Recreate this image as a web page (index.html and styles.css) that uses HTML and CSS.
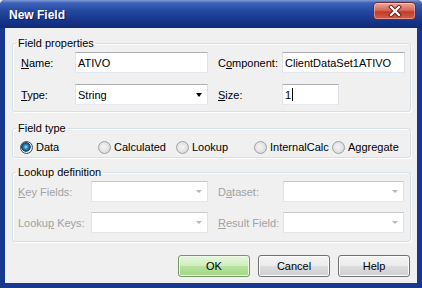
FILE: index.html
```html
<!doctype html>
<html lang="en">
<head>
  <meta charset="UTF-8">
  <title>New Field</title>
  <link rel="stylesheet" href="styles.css">
</head>
<body>
<div class="window">
  <div class="titlebar">
    <span class="title">New Field</span>
    <span class="close">
      <svg width="14" height="12" viewBox="0 0 14 12">
        <path d="M3 2 L11 10 M11 2 L3 10" stroke="#6a1a12" stroke-width="4" stroke-linecap="square"/>
        <path d="M3 2 L11 10 M11 2 L3 10" stroke="#ffffff" stroke-width="2.2" stroke-linecap="square"/>
      </svg>
    </span>
  </div>

  <div class="client">
    <!-- field properties -->
    <fieldset class="group props">
      <legend>Field properties</legend>
      <div class="props-grid">
        <label class="lbl"><u>N</u>ame:</label>
        <div class="edit">ATIVO</div>
        <label class="lbl right">C<u>o</u>mponent:</label>
        <div class="edit">ClientDataSet1ATIVO</div>
        <label class="lbl"><u>T</u>ype:</label>
        <div class="combo">String<i class="arrow"></i></div>
        <label class="lbl right"><u>S</u>ize:</label>
        <div class="edit size">1<span class="caret"></span></div>
      </div>
    </fieldset>

    <!-- field type -->
    <fieldset class="group types">
      <legend>Field type</legend>
      <div class="radio-row">
        <span class="opt"><i class="radio on"></i>Data</span>
        <span class="opt"><i class="radio"></i>Calculated</span>
        <span class="opt"><i class="radio"></i>Lookup</span>
        <span class="opt"><i class="radio"></i>InternalCalc</span>
        <span class="opt"><i class="radio"></i>Aggregate</span>
      </div>
    </fieldset>

    <!-- lookup definition -->
    <fieldset class="group lookup">
      <legend>Lookup definition</legend>
      <div class="lookup-grid">
        <label class="lbl off"><u>K</u>ey Fields:</label>
        <div class="combo off"><i class="arrow"></i></div>
        <label class="lbl off right">D<u>a</u>taset:</label>
        <div class="combo off"><i class="arrow"></i></div>
        <label class="lbl off">Looku<u>p</u> Keys:</label>
        <div class="combo off"><i class="arrow"></i></div>
        <label class="lbl off right"><u>R</u>esult Field:</label>
        <div class="combo off"><i class="arrow"></i></div>
      </div>
    </fieldset>

    <div class="buttons">
      <a href="#" class="btn ok">OK</a>
      <a href="#" class="btn">Cancel</a>
      <a href="#" class="btn">Help</a>
    </div>
  </div>
</div>
</body>
</html>
```

FILE: styles.css
```css
body {
  margin: 0;
  background: #dfe5ee;
  font-family: "Liberation Sans", Arial, sans-serif;
  font-size: 11px;
  color: #000;
}
.window {
  width: 422px;
  height: 288px;
  display: flex;
  flex-direction: column;
  background: #17388c;
  border-radius: 5px 5px 0 0;
  overflow: hidden;
}
.titlebar {
  height: 28px;
  flex: none;
  display: flex;
  align-items: center;
  justify-content: space-between;
  padding: 0 6px 0 9px;
  background: linear-gradient(to bottom, #7e9bd6 0, #3d62b8 3px, #24489f 40%, #16348a 75%, #102a76 100%);
}
.title {
  color: #fff;
  font-weight: bold;
  font-size: 12px;
  text-shadow: 1px 1px 0 #0b2060;
  margin-top: 2px;
}
.close {
  width: 41px;
  height: 16px;
  margin-bottom: 7px;
  border: 1px solid #6e2a2a;
  border-radius: 4px;
  background: linear-gradient(to bottom, #e8a89c 0, #d66a58 45%, #c23b28 55%, #d4604a 100%);
  display: flex;
  align-items: center;
  justify-content: center;
  box-shadow: inset 0 0 0 1px rgba(255,255,255,0.35);
}
.close svg {
  display: block;
}

.client {
  flex: 1;
  margin: 0 5px 5px 5px;
  background: #f0f0f0;
  padding: 8px 6px 0 7px;
  display: flex;
  flex-direction: column;
}

.group {
  margin: 0;
  min-width: 0;
  border: 1px solid #d5dfe5;
  border-radius: 3px;
  box-shadow: inset 1px 1px 0 #fff, 1px 1px 0 #fff;
}
.group legend {
  line-height: 14px;
  padding: 0 2px;
}

.props {
  padding: 2px 5px 6px 8px;
}
.props legend {
  margin-left: -5px;
}
.props-grid {
  display: grid;
  grid-template-columns: 54px 133px 74px 123px;
  grid-auto-rows: 21px;
  row-gap: 11px;
  align-items: center;
}

.lbl {
  white-space: nowrap;
}
.lbl.right {
  padding-left: 10px;
}
.lbl.off {
  color: #a2a2a2;
}

.edit,
.combo {
  height: 21px;
  box-sizing: border-box;
  border: 1px solid;
  border-color: #abadb3 #dbdfe6 #e3e9ef #e2e3ea;
  background: #fff;
  padding: 0 2px;
  display: flex;
  align-items: center;
  white-space: nowrap;
}
.edit.size {
  width: 57px;
}
.caret {
  width: 1px;
  height: 13px;
  background: #000;
  margin-left: 1px;
}
.combo {
  justify-content: space-between;
  padding-right: 5px;
}
.arrow {
  width: 0;
  height: 0;
  margin-left: auto;
  border-left: 3px solid transparent;
  border-right: 3px solid transparent;
  border-top: 4px solid #000;
}
.combo.off {
  border-color: #c6c8cc #e0e2e6 #e4e6ea #e0e2e6;
}
.combo.off .arrow {
  border-top-color: #b8b8b8;
  border-left-width: 3px;
  border-right-width: 3px;
  border-top-width: 3px;
}

.types {
  margin-top: 9px;
  padding: 5px 5px 3px 7px;
}
.types legend {
  margin-left: -4px;
}
.radio-row {
  display: grid;
  grid-template-columns: repeat(5, 78px);
  line-height: 14px;
}
.opt {
  display: flex;
  align-items: center;
  white-space: nowrap;
}
.radio {
  width: 11px;
  height: 11px;
  border-radius: 50%;
  border: 1px solid #9ea0a2;
  margin-right: 3px;
  background: radial-gradient(circle at 45% 45%, #f6f6f6 0, #e0e0e0 60%, #cfcfcf 100%);
  flex: none;
}
.radio.on {
  border-color: #3b4f5f;
  background: radial-gradient(circle at 45% 45%, #9fe0ff 0, #2c8fcf 2px, #1d5a86 3.5px, #2a4656 4.5px, #e8e8e8 5px, #cfcfcf 100%);
}

.lookup {
  margin-top: 7px;
  padding: 2px 5px 8px 5px;
}
.lookup legend {
  margin-left: -2px;
}
.lookup-grid {
  display: grid;
  grid-template-columns: 73px 117px 75px 121px;
  grid-auto-rows: 21px;
  row-gap: 10px;
  align-items: center;
}

.buttons {
  display: flex;
  justify-content: flex-end;
  gap: 8px;
  margin-top: 13px;
  margin-right: 1px;
}
.btn {
  width: 72px;
  height: 22px;
  box-sizing: border-box;
  border: 1px solid #707070;
  border-radius: 3px;
  display: flex;
  align-items: center;
  justify-content: center;
  color: #000;
  text-decoration: none;
  background: linear-gradient(to bottom, #f4f4f4 0, #ebebeb 48%, #dddddd 52%, #cfcfcf 100%);
  box-shadow: inset 0 0 0 1px #fcfcfc;
}
.btn.ok {
  border-color: #6f9a62;
  background: linear-gradient(to bottom, #e6f6dc 0, #cfeec0 48%, #b5e29c 52%, #a2d886 100%);
  box-shadow: inset 0 0 0 1px #eefae6;
}
```
